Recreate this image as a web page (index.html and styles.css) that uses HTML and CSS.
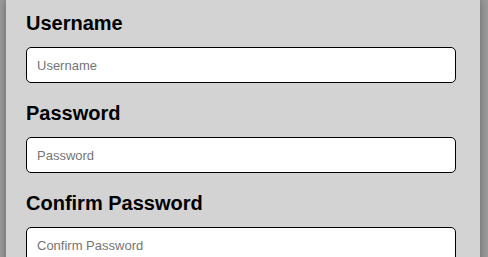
FILE: index.html
```html
<!DOCTYPE html>
<html lang="en">
<head>
<meta charset="UTF-8" />
<title>Sign up</title>
<link rel="stylesheet" href="styles.css">
</head>
<body>
  <form class="signup-card">
    <div class="field">
      <label for="username">Username</label>
      <input id="username" type="text" placeholder="Username" />
    </div>
    <div class="field">
      <label for="password">Password</label>
      <input id="password" type="password" placeholder="Password" />
    </div>
    <div class="field">
      <label for="confirm">Confirm Password</label>
      <input id="confirm" type="password" placeholder="Confirm Password" />
    </div>
  </form>
</body>
</html>
```

FILE: styles.css
```css
* {
  box-sizing: border-box;
}
body, html {
  margin: 0;
  padding: 0;
  height: 100%;
  background: #9a9a9a;
  font-family: "Liberation Sans", Arial, sans-serif;
  overflow: hidden;
}

/* Card */
.signup-card {
  width: 474px;
  margin: 0 0 0 6px;
  min-height: 100%;
  padding: 12px 24px 20px 20px;
  background: #d3d3d3;
  box-shadow: 0 0 8px rgba(0,0,0,0.35);
}

.field {
  display: flex;
  flex-direction: column;
  margin-bottom: 19px;
}
.field label {
  font-size: 20px;
  font-weight: bold;
  line-height: 23px;
  color: #000;
  margin-bottom: 12px;
}
.field input {
  width: 100%;
  height: 36px;
  padding: 0 10px;
  border: 1px solid #000;
  border-radius: 5px;
  background: #fff;
  font-family: "Liberation Sans", Arial, sans-serif;
  font-size: 13px;
  outline: none;
}
.field input::placeholder {
  color: #757575;
}
```
